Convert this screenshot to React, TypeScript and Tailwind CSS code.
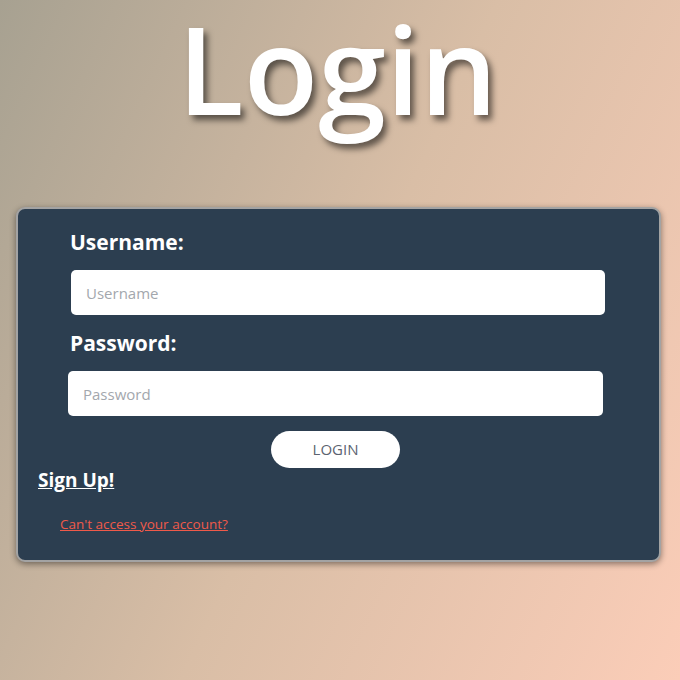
export default function App() {
  return (
    <div className="min-h-screen w-full overflow-hidden bg-[linear-gradient(115deg,#a7a191_0%,#d9bea6_50%,#fbcdb8_100%)] font-['Open_Sans',sans-serif]">
      <h1 className="h-[136px] text-center text-[122px] leading-[136px] font-semibold text-white [text-shadow:4px_5px_6px_rgba(0,0,0,0.55)] pr-[5px]">
        Login
      </h1>
      <div className="mt-[71px] ml-[16px] w-[645px] rounded-[9px] border-2 border-[#a3a3a3] bg-[#2c3e50] shadow-[0_2px_6px_rgba(0,0,0,0.45)] pt-[19px] pb-[27px]">
        <div className="pl-[52px] pr-[54px]">
          <label className="block text-[21px] leading-[28px] font-bold text-white">Username:</label>
          <input
            type="text"
            placeholder="Username"
            className="mt-[14px] ml-[1px] block h-[45px] w-[534px] rounded-[5px] bg-white px-[15px] text-[15px] text-gray-700 outline-none placeholder:text-[#a3a7ad]"
          />
          <label className="mt-[14px] block text-[21px] leading-[28px] font-bold text-white">Password:</label>
          <input
            type="password"
            placeholder="Password"
            className="mt-[14px] ml-[-2px] block h-[45px] w-[535px] rounded-[5px] bg-white px-[15px] text-[15px] text-gray-700 outline-none placeholder:text-[#a3a7ad]"
          />
        </div>
        <div className="mt-[15px] flex">
          <button className="ml-[253px] h-[37px] w-[129px] rounded-full bg-white text-[15px] text-[#5b6370]">
            LOGIN
          </button>
        </div>
        <a href="#" className="ml-[20px] block w-fit text-[19px] leading-[24px] font-bold text-white underline">
          Sign Up!
        </a>
        <a href="#" className="mt-[23px] ml-[42px] block w-fit text-[13.5px] leading-[18px] text-[#f05a4a] underline">
          Can't access your account?
        </a>
      </div>
    </div>
  );
}
